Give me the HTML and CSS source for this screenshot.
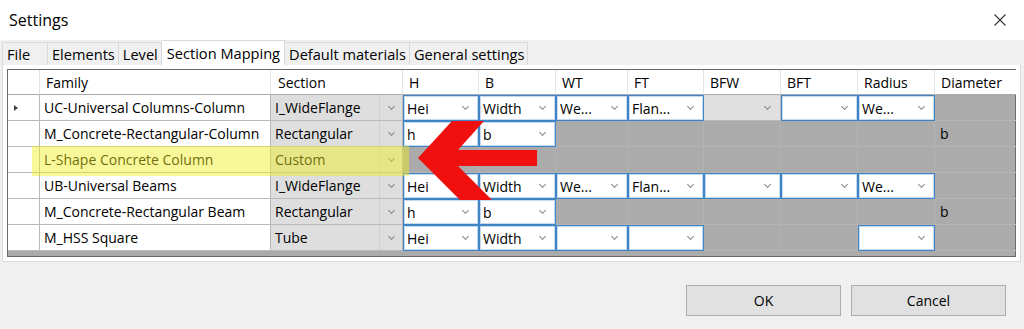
FILE: index.html
```html
<!DOCTYPE html>
<html lang="en">
<head>
  <meta charset="UTF-8" />
  <title>Settings</title>
  <link rel="stylesheet" href="styles.css">
</head>
<body>
  <div class="window">
    <div class="titlebar">
      <span class="title">Settings</span>
      <svg class="close" width="14" height="14" viewBox="0 0 14 14"><path d="M1.5 1.5L12.5 12.5M12.5 1.5L1.5 12.5" stroke="#333" stroke-width="1.1" fill="none"/></svg>
    </div>

    <div class="tabs">
      <div class="tab file">File</div>
      <div class="tab">Elements</div>
      <div class="tab">Level</div>
      <div class="tab active">Section Mapping</div>
      <div class="tab">Default materials</div>
      <div class="tab">General settings</div>
    </div>

    <div class="panel">
      <div class="grid">
        <!-- header -->
        <div class="hd"></div>
        <div class="hd">Family</div>
        <div class="hd sec-hd">Section</div>
        <div class="hd">H</div>
        <div class="hd">B</div>
        <div class="hd">WT</div>
        <div class="hd">FT</div>
        <div class="hd">BFW</div>
        <div class="hd">BFT</div>
        <div class="hd">Radius</div>
        <div class="hd last">Diameter</div>

        <!-- row 1 -->
        <div class="rh"><span class="cur"></span></div>
        <div class="fam">UC-Universal Columns-Column</div>
        <div class="sec"><span>I_WideFlange</span><span class="btn"><i class="chev"></i></span></div>
        <div class="cb">Hei<i class="chev"></i></div>
        <div class="cb">Width<i class="chev"></i></div>
        <div class="cb">We...<i class="chev"></i></div>
        <div class="cb">Flan...<i class="chev"></i></div>
        <div class="cb off"><i class="chev"></i></div>
        <div class="cb"><i class="chev"></i></div>
        <div class="cb">We...<i class="chev"></i></div>
        <div class="na last"></div>

        <!-- row 2 -->
        <div class="rh"></div>
        <div class="fam">M_Concrete-Rectangular-Column</div>
        <div class="sec"><span>Rectangular</span><span class="btn"><i class="chev"></i></span></div>
        <div class="cb">h<i class="chev"></i></div>
        <div class="cb">b<i class="chev"></i></div>
        <div class="na"></div>
        <div class="na"></div>
        <div class="na"></div>
        <div class="na"></div>
        <div class="na"></div>
        <div class="na last">b</div>

        <!-- row 3 -->
        <div class="rh"></div>
        <div class="fam">L-Shape Concrete Column</div>
        <div class="sec"><span>Custom</span><span class="btn"><i class="chev"></i></span></div>
        <div class="na"></div>
        <div class="na"></div>
        <div class="na"></div>
        <div class="na"></div>
        <div class="na"></div>
        <div class="na"></div>
        <div class="na"></div>
        <div class="na last"></div>

        <!-- row 4 -->
        <div class="rh"></div>
        <div class="fam">UB-Universal Beams</div>
        <div class="sec"><span>I_WideFlange</span><span class="btn"><i class="chev"></i></span></div>
        <div class="cb">Hei<i class="chev"></i></div>
        <div class="cb">Width<i class="chev"></i></div>
        <div class="cb">We...<i class="chev"></i></div>
        <div class="cb">Flan...<i class="chev"></i></div>
        <div class="cb"><i class="chev"></i></div>
        <div class="cb"><i class="chev"></i></div>
        <div class="cb">We...<i class="chev"></i></div>
        <div class="na last"></div>

        <!-- row 5 -->
        <div class="rh"></div>
        <div class="fam">M_Concrete-Rectangular Beam</div>
        <div class="sec"><span>Rectangular</span><span class="btn"><i class="chev"></i></span></div>
        <div class="cb">h<i class="chev"></i></div>
        <div class="cb">b<i class="chev"></i></div>
        <div class="na"></div>
        <div class="na"></div>
        <div class="na"></div>
        <div class="na"></div>
        <div class="na"></div>
        <div class="na last">b</div>

        <!-- row 6 -->
        <div class="rh"></div>
        <div class="fam">M_HSS Square</div>
        <div class="sec"><span>Tube</span><span class="btn"><i class="chev"></i></span></div>
        <div class="cb">Hei<i class="chev"></i></div>
        <div class="cb">Width<i class="chev"></i></div>
        <div class="cb"><i class="chev"></i></div>
        <div class="cb"><i class="chev"></i></div>
        <div class="na"></div>
        <div class="na"></div>
        <div class="cb"><i class="chev"></i></div>
        <div class="na last"></div>
      </div>
    </div>

    <div class="buttons">
      <button>OK</button>
      <button>Cancel</button>
    </div>

    <!-- annotation overlays -->
    <div class="mark"></div>
    <svg class="arrow" width="1024" height="329" viewBox="0 0 1024 329">
      <polygon points="418,158 452,121 484,121 458,150 537,150 537,166 458,166 492,200 460,200" fill="#f01010"/>
    </svg>
  </div>
</body>
</html>
```

FILE: styles.css
```css
* {
  box-sizing: border-box;
}
body {
  margin: 0;
  font-family: "Open Sans", "Noto Sans", sans-serif;
  font-size: 14px;
  color: #000;
}
.window {
  position: relative;
  width: 1024px;
  height: 329px;
  background: #f0f0f0;
  overflow: hidden;
}
.titlebar {
  height: 40px;
  background: #fff;
  display: flex;
  align-items: center;
  justify-content: space-between;
  padding: 0 17px 0 9px;
}
.title {
  font-size: 16px;
}
.tabs {
  height: 25px;
  display: flex;
  align-items: flex-end;
  padding-left: 2px;
  font-size: 14.6px;
}
.tab {
  height: 23px;
  padding: 0 3px 0 4px;
  display: flex;
  align-items: center;
  background: #f0f0f0;
  border: 1px solid #d9d9d9;
  border-bottom: none;
  border-left: none;
}
.tab.file {
  width: 46px;
  border-left: 1px solid #d9d9d9;
  padding-left: 4px;
}
.tab.active {
  height: 25px;
  background: #fff;
  padding: 0 4px 0 5px;
}
.panel {
  margin: 0 3px 0 2px;
  background: #fff;
  border: 1px solid #d9d9d9;
  border-top: none;
  padding: 4px;
}
.grid {
  display: grid;
  grid-template-columns: 32px 231px 132px 76px 77px 72px 76px 77px 77px 77px 81px;
  grid-template-rows: 25px repeat(6, 26px);
  background: #ababab;
  border: 1px solid #6a6a6a;
  padding-bottom: 5px;
}
.grid > div {
  display: flex;
  align-items: center;
  white-space: nowrap;
  overflow: hidden;
}
.hd {
  background: #fff;
  border-right: 1px solid #e4e4e4;
  border-bottom: 1px solid #a9a9a9;
  padding-left: 6px;
}
.hd.sec-hd {
  padding-left: 7px;
}
.rh {
  background: #fff;
  border-right: 1px solid #b9b9b9;
  border-bottom: 1px solid #b9b9b9;
  padding-left: 6px;
}
.cur {
  width: 0;
  height: 0;
  border-left: 4px solid #444;
  border-top: 3px solid transparent;
  border-bottom: 3px solid transparent;
}
.fam {
  background: #fff;
  border-right: 1px solid #b9b9b9;
  border-bottom: 1px solid #b9b9b9;
  padding-left: 4px;
}
.sec {
  background: #dedede;
  border-right: 1px solid #b9b9b9;
  border-bottom: 1px solid #b9b9b9;
  padding-left: 4px;
}
.sec span:first-child {
  flex: 1;
}
.sec .btn {
  width: 23px;
  height: 100%;
  border-left: 1px solid #cfcfcf;
  display: flex;
  align-items: center;
  justify-content: center;
}
.sec .btn .chev {
  margin: -3px 0 0;
}
.cb {
  background: #fff;
  border: 1px solid #3f84c6;
  box-shadow: inset 0 0 0 1px rgba(63, 132, 198, 0.3);
  padding-left: 3px;
}
.cb.off {
  background: #e0e0e0;
  border: none;
  border-right: 1px solid #b9b9b9;
  border-bottom: 1px solid #b9b9b9;
  box-shadow: none;
}
.chev {
  display: block;
  width: 5px;
  height: 5px;
  border-right: 1px solid #888;
  border-bottom: 1px solid #888;
  transform: rotate(45deg);
  margin: -3px 10px 0 auto;
}
.na {
  border-right: 1px solid #b4b4b4;
  border-bottom: 1px solid #b4b4b4;
  padding-left: 5px;
}
.grid > .last {
  border-right: none;
}
.buttons {
  display: flex;
  justify-content: flex-end;
  gap: 10px;
  padding: 23px 18px 0 0;
}
button {
  width: 155px;
  height: 31px;
  background: #e1e1e1;
  border: 1px solid #adadad;
  font-family: inherit;
  font-size: 14px;
  color: #000;
}
.mark {
  position: absolute;
  left: 32px;
  top: 146px;
  width: 377px;
  height: 30px;
  background: rgba(240, 240, 30, 0.45);
}
.arrow {
  position: absolute;
  left: 0;
  top: 0;
}
```
